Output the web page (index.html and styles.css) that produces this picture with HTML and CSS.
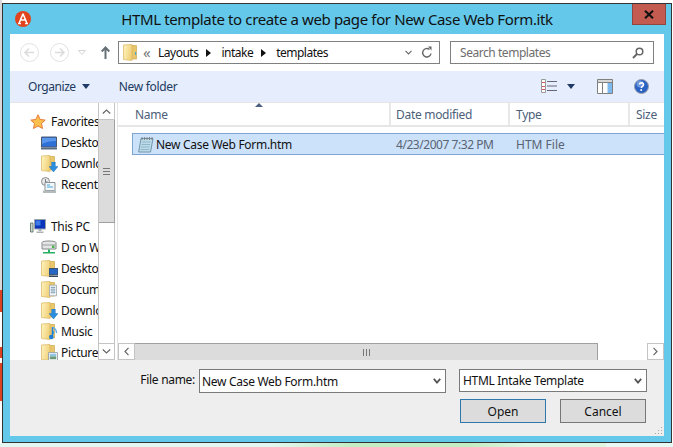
FILE: index.html
```html
<!DOCTYPE html>
<html lang="en">
<head>
<meta charset="utf-8">
<title>HTML template to create a web page</title>
<link rel="stylesheet" href="styles.css">
</head>
<body>
<svg class="defs" width="0" height="0" aria-hidden="true">
  <defs>
    <linearGradient id="fold" x1="0" y1="0" x2="1" y2="0.3">
      <stop offset="0" stop-color="#fff4c0"/>
      <stop offset="1" stop-color="#f0d27c"/>
    </linearGradient>
    <symbol id="folder" viewBox="0 0 14 17">
      <path d="M8 1.500h5.500v13.500H8z" fill="#e8c76c" stroke="#cfa850" stroke-width=".7"/>
      <path d="M.5 1 9 .5v16L.5 15.500z" fill="url(#fold)" stroke="#d8b55e" stroke-width=".7"/>
      <path d="M12 8h1.200v3H12z" fill="#4fa8c8"/>
    </symbol>
  </defs>
</svg>
<div class="desk">
  <div class="bg-red bg-red-a"></div>
  <div class="bg-red bg-red-b"></div>
  <div class="bg-red bg-red-c"></div>
  <div class="bg-gray"></div>
  <div class="bg-green"></div>
  <div class="win">
    <div class="titlebar">
      <svg class="app-logo" width="16" height="16" viewBox="0 0 16 16"><circle cx="8" cy="8" r="8" fill="#e2431c"/><path d="M8 2.800 4 12.500M8 2.800 12 12.500M4.800 9h6.400" fill="none" stroke="#fff" stroke-width="1.600"/><path d="M3 12.600h3M10 12.600h3" stroke="#fff" stroke-width="1.100"/></svg>
      <div class="title">HTML template to create a web page for New Case Web Form.itk</div>
      <div class="close"><svg width="12" height="9" viewBox="0 0 12 9"><path d="M2 .8 10 8.200M10 .8 2 8.200" stroke="#111" stroke-width="2.100"/></svg></div>
    </div>
    <div class="client">
      <div class="navbar">
        <svg class="nav-round" width="19" height="19" viewBox="0 0 19 19"><circle cx="9.500" cy="9.500" r="9" fill="#fff" stroke="#e2e2e2"/><path d="M14 9.500H5.500M9 5.500l-4 4 4 4" fill="none" stroke="#dcdcdc" stroke-width="1.600"/></svg>
        <svg class="nav-round nav-fwd" width="19" height="19" viewBox="0 0 19 19"><circle cx="9.500" cy="9.500" r="9" fill="#fff" stroke="#e2e2e2"/><path d="M5 9.500h8.500M10 5.500l4 4-4 4" fill="none" stroke="#dcdcdc" stroke-width="1.600"/></svg>
        <svg class="nav-drop" width="8" height="5" viewBox="0 0 8 5"><path d="M.5.500h7L4 4.500z" fill="#fff" stroke="#d5d5d5"/></svg>
        <svg class="nav-up" width="9" height="13" viewBox="0 0 9 13"><path d="M4.500 13V1.500M.7 5.500l3.800-4 3.800 4" fill="none" stroke="#667076" stroke-width="2"/></svg>
        <div class="addr">
          <svg class="addr-folder" width="14" height="17"><use href="#folder"/></svg>
          <span class="chev">«</span>
          <span class="crumb">Layouts</span>
          <svg class="crumb-sep" width="5" height="8" viewBox="0 0 5 8"><path d="M0 0l5 4-5 4z" fill="#111"/></svg>
          <span class="crumb">intake</span>
          <svg class="crumb-sep" width="5" height="8" viewBox="0 0 5 8"><path d="M0 0l5 4-5 4z" fill="#111"/></svg>
          <span class="crumb">templates</span>
          <span class="addr-fill"></span>
          <svg class="addr-down" width="7" height="5" viewBox="0 0 7 5"><path d="M.5.800 3.500 4 6.500.8" fill="none" stroke="#666" stroke-width="1.100"/></svg>
          <svg class="addr-refresh" width="12" height="13" viewBox="0 0 12 13"><path d="M10 7.500a4.200 4.200 0 1 1-1.500-4" fill="none" stroke="#666" stroke-width="1.400"/><path d="M7 .5h3.500v4z" fill="#666"/></svg>
        </div>
        <div class="search">
          <span class="search-text">Search templates</span>
          <svg width="12" height="12" viewBox="0 0 12 12"><circle cx="7.500" cy="4.500" r="3.300" fill="none" stroke="#666" stroke-width="1.500"/><path d="M5 7 1 11" stroke="#666" stroke-width="2"/></svg>
        </div>
      </div>
      <div class="cmdbar">
        <span class="cmd cmd-org">Organize</span>
        <svg class="caret" width="8" height="5" viewBox="0 0 8 5"><path d="M0 0h8L4 5z" fill="#1f3a66"/></svg>
        <span class="cmd cmd-new">New folder</span>
        <span class="cmd-fill"></span>
        <svg class="view-icon" width="16" height="14" viewBox="0 0 16 14"><path d="M.5.500h4v13h-4z" fill="#fff" stroke="#999"/><path d="M1 3.500h3M1 7.500h3M1 10.500h3" stroke="#c33" stroke-width=".8"/><path d="M6 2.500h10M6 7h10M6 11.500h10" stroke="#667" stroke-width="1.200"/></svg>
        <svg class="caret caret-view" width="8" height="5" viewBox="0 0 8 5"><path d="M0 0h8L4 5z" fill="#1f3a66"/></svg>
        <svg class="pane-icon" width="16" height="15" viewBox="0 0 16 15"><path d="M.5 1.500h15v13H.5z" fill="#fff" stroke="#7f7f7f"/><path d="M.5.500h15v3H.5z" fill="#d8d8d8" stroke="#7f7f7f"/><path d="M5.500 3.500v11" stroke="#7f7f7f"/><path d="M10.500 4h4.500v10h-4.500z" fill="#7db9ef"/></svg>
        <svg class="help-icon" width="15" height="15" viewBox="0 0 15 15"><circle cx="7.500" cy="7.500" r="7" fill="#2a62c4" stroke="#9a9fa8" stroke-width="1"/><circle cx="6" cy="5" r="3.500" fill="#6d97dd"/><path d="M5.500 5.500C5.500 3.200 9.800 3.300 9.500 5.800 9.300 7.300 7.500 7.300 7.300 9" fill="none" stroke="#fff" stroke-width="1.600"/><circle cx="7.200" cy="11" r="1" fill="#fff"/></svg>
      </div>
      <div class="main">
        <div class="nav-wrap">
          <div class="tree">
            <div class="tree-row top">
              <svg class="ticon" width="16" height="16" viewBox="0 0 16 16"><path d="M8 .8l2.200 4.700 5 .6-3.700 3.400 1 5L8 12l-4.500 2.500 1-5L.8 6.100l5-.6z" fill="#fbc04c" stroke="#e8793a" stroke-width="1"/></svg>
              <span>Favorites</span>
            </div>
            <div class="tree-row">
              <svg class="ticon" width="16" height="14" viewBox="0 0 16 14"><path d="M.500 1h15v10H.500z" fill="#2f6fd8" stroke="#4b5a70"/><path d="M1 2h14v3C9 5 5 6 1 8z" fill="#5a96ea"/><path d="M0 11.500h16v2H0z" fill="#5a6a80"/></svg>
              <span>Desktop</span>
            </div>
            <div class="tree-row">
              <span class="badge-wrap">
                <svg class="ticon" width="14" height="17"><use href="#folder"/></svg>
                <svg class="badge" width="9" height="10" viewBox="0 0 10 11"><path d="M3 0h4v5h3l-5 6-5-6h3z" fill="#2b8ee0" stroke="#1a6db5" stroke-width=".5"/></svg>
              </span>
              <span>Downloads</span>
            </div>
            <div class="tree-row">
              <svg class="ticon" width="16" height="16" viewBox="0 0 16 16"><circle cx="4.500" cy="4.500" r="4" fill="#e8e8e8" stroke="#8a8a8a"/><path d="M4.500 2v3h2" fill="none" stroke="#666" stroke-width=".8"/><path d="M4 5.500h10v8H4z" fill="#f2f6f8" stroke="#8a9298"/><path d="M6 8h3M6 10h6" stroke="#4aa8d8"/><path d="M2 13.500h13V16H2z" fill="#b5babd"/></svg>
              <span>Recent places</span>
            </div>
            <div class="tree-row top pc">
              <svg class="ticon" width="16" height="15" viewBox="0 0 16 15"><path d="M.500 4h2.500v9H.500z" fill="#cfd4d4" stroke="#6a8070"/><path d="M4.500.500h11v9.500h-11z" fill="#0a35b8" stroke="#9aa3ad"/><path d="M5.500 1.500h5v5h-5z" fill="#3c7ae8"/><path d="M8.500 10h3v2h-3zM6.500 12.500h7v1.500h-7z" fill="#aab0b5"/></svg>
              <span>This PC</span>
            </div>
            <div class="tree-row">
              <svg class="ticon" width="16" height="15" viewBox="0 0 16 15"><path d="M1 2.500C1 .5 15 .5 15 2.500v6.500H1z" fill="#e4e6e6" stroke="#858a8a"/><path d="M1.500 5h13" stroke="#9a9f9f"/><path d="M11 5.500h2.500V8H11z" fill="#4cb34c"/><path d="M7 9.500h2V12h5v1.500H2V12h5z" fill="#26b060"/></svg>
              <span>D on WIN</span>
            </div>
            <div class="tree-row">
              <span class="badge-wrap">
                <svg class="ticon" width="14" height="17"><use href="#folder"/></svg>
                <svg class="badge" width="9" height="9" viewBox="0 0 10 10"><path d="M0 .5h10v7H0z" fill="#2566c4" stroke="#33465e"/><path d="M0 8.500h10V10H0z" fill="#33465e"/></svg>
              </span>
              <span>Desktop</span>
            </div>
            <div class="tree-row">
              <span class="badge-wrap">
                <svg class="ticon" width="14" height="17"><use href="#folder"/></svg>
                <svg class="badge badge-doc" width="8" height="13" viewBox="0 0 9 13"><path d="M.5.500h8v12h-8z" fill="#f3f6f8" stroke="#a0a8ae"/><path d="M2 3h5M2 5h5M2 7h5M2 9h5" stroke="#6a8ea8"/></svg>
              </span>
              <span>Documents</span>
            </div>
            <div class="tree-row">
              <span class="badge-wrap">
                <svg class="ticon" width="14" height="17"><use href="#folder"/></svg>
                <svg class="badge" width="9" height="10" viewBox="0 0 10 11"><path d="M3 0h4v5h3l-5 6-5-6h3z" fill="#2b8ee0" stroke="#1a6db5" stroke-width=".5"/></svg>
              </span>
              <span>Downloads</span>
            </div>
            <div class="tree-row">
              <span class="badge-wrap">
                <svg class="ticon" width="14" height="17"><use href="#folder"/></svg>
                <svg class="badge" width="9" height="13" viewBox="0 0 9 13"><path d="M3.500 0v9" stroke="#1f7fd8" stroke-width="1.500"/><path d="M3.500 0c2 1 4 3 4 6" fill="none" stroke="#5aa8e8" stroke-width="1.300"/><ellipse cx="2.300" cy="10" rx="2.300" ry="2.300" fill="#1f7fd8"/></svg>
              </span>
              <span>Music</span>
            </div>
            <div class="tree-row">
              <span class="badge-wrap">
                <svg class="ticon" width="14" height="17"><use href="#folder"/></svg>
                <svg class="badge" width="10" height="9" viewBox="0 0 11 10"><path d="M.5.500h10v9H.5z" fill="#eef3f5" stroke="#98a2a8"/><path d="M2 2h7v3H2z" fill="#8fc4e4"/><path d="M2 5h7v3H2z" fill="#6f9a7a"/></svg>
              </span>
              <span>Pictures</span>
            </div>
          </div>
          <div class="vscroll">
            <div class="sb-btn"><svg width="9" height="5" viewBox="0 0 9 5"><path d="M.8 4.500 4.500 1l3.700 3.500" fill="none" stroke="#666" stroke-width="1.200"/></svg></div>
            <div class="v-thumb"><span class="grip-v"></span></div>
            <div class="sb-fill"></div>
            <div class="sb-btn sb-btn-down"><svg width="9" height="5" viewBox="0 0 9 5"><path d="M.8.500 4.500 4l3.700-3.500" fill="none" stroke="#666" stroke-width="1.200"/></svg></div>
          </div>
        </div>
        <div class="files">
          <div class="head">
            <svg class="sort" width="8" height="4" viewBox="0 0 8 4"><path d="M4 0l4 4H0z" fill="#4c5f80"/></svg>
            <div class="col col-name">Name</div>
            <div class="col col-date">Date modified</div>
            <div class="col col-type">Type</div>
            <div class="col col-size">Size</div>
          </div>
          <div class="list">
            <div class="file">
              <div class="cell cell-name">
                <svg class="file-icon" width="16" height="17" viewBox="0 0 16 17"><path d="M3 2.500h12L12.500 16H.7z" fill="#bddbe8" stroke="#6f95a8"/><path d="M4 6h8.500M3.500 8.500H12M3 11h8.500M2.500 13.500h8.500" stroke="#83acc0" stroke-width=".8"/><path d="M4 1v3M6.500 1v3M9 1v3M11.500 1v3M14 1v3" stroke="#7a7a7a" stroke-width=".9"/></svg>
                <span>New Case Web Form.htm</span>
              </div>
              <div class="cell cell-date">4/23/2007 7:32 PM</div>
              <div class="cell cell-type">HTM File</div>
            </div>
          </div>
          <div class="hscroll">
            <div class="sb-btn-h"><svg width="5" height="9" viewBox="0 0 5 9"><path d="M4.500.8 1 4.500l3.500 3.700" fill="none" stroke="#666" stroke-width="1.200"/></svg></div>
            <div class="h-thumb"><span class="grip-h"></span></div>
            <div class="sb-fill"></div>
            <div class="sb-btn-h sb-btn-right"><svg width="5" height="9" viewBox="0 0 5 9"><path d="M.5.8 4 4.500.5 8.200" fill="none" stroke="#666" stroke-width="1.200"/></svg></div>
          </div>
        </div>
      </div>
      <div class="footer">
        <div class="fields">
          <label class="fname-label">File name:</label>
          <div class="combo combo-name"><span>New Case Web Form.htm</span><svg width="8" height="6" viewBox="0 0 8 6"><path d="M.8.800 4 4.500 7.200.8" fill="none" stroke="#555" stroke-width="1.800"/></svg></div>
          <div class="combo combo-type"><span>HTML Intake Template</span><svg width="8" height="6" viewBox="0 0 8 6"><path d="M.8.800 4 4.500 7.200.8" fill="none" stroke="#555" stroke-width="1.800"/></svg></div>
        </div>
        <div class="actions">
          <div class="btn btn-primary">Open</div>
          <div class="btn">Cancel</div>
        </div>
        <svg class="sizer" width="9" height="9" viewBox="0 0 9 9"><path d="M7 1h1v1H7zM4 4h1v1H4zM7 4h1v1H7zM1 7h1v1H1zM4 7h1v1H4zM7 7h1v1H7z" fill="#a8a8a8"/></svg>
      </div>
    </div>
  </div>
</div>
</body>
</html>
```
FILE: styles.css
```css
* { box-sizing: border-box; }
html, body { margin: 0; padding: 0; }
body { font-family: "Noto Sans", "Open Sans", sans-serif; font-size: 12px; letter-spacing: -0.3px; color: #111; background: #fff; }
svg { display: block; flex: none; }
.defs { position: absolute; }

.desk { position: relative; width: 673px; height: 447px; overflow: hidden; background: #fff; }
.bg-gray { position: absolute; left: 0; top: 0; width: 2px; height: 290px; background: #d8d8d8; }
.bg-red { position: absolute; left: 0; width: 2px; background: #dd4320; }
.bg-red-a { top: 290px; height: 22px; }
.bg-red-b { top: 347px; height: 11px; }
.bg-red-c { top: 363px; height: 38px; }
.bg-green { position: absolute; left: 0; right: 0; top: 443px; height: 4px; background: linear-gradient(90deg, #e4f8f1 0 40%, #c4edc4 52% 70%, #dff6e2 78% 90%, #e8f8f2 90%); }

.win { position: absolute; left: 2px; top: 3px; width: 670px; height: 440px; border: 1px solid #333; background: #63c8ea; padding: 0 7px 6px; display: flex; flex-direction: column; }

.titlebar { height: 30px; position: relative; display: flex; align-items: center; justify-content: center; flex: none; }
.app-logo { position: absolute; left: 5px; top: 7px; }
.title { font-size: 15px; letter-spacing: -0.37px; color: #111; white-space: nowrap; }
.close { position: absolute; right: -2px; top: 0; width: 34px; height: 21px; background: #c35b51; border: 1px solid #8f4740; border-top: 0; display: flex; align-items: center; justify-content: center; }

.client { flex: 1; background: #fff; display: flex; flex-direction: column; min-height: 0; }

.navbar { height: 37px; flex: none; display: flex; align-items: center; padding-left: 10px; }
.nav-fwd { margin-left: 11px; }
.nav-drop { margin-left: 9px; }
.nav-up { margin-left: 15px; }
.addr { width: 322px; height: 23px; margin-left: 8px; border: 1px solid #808080; display: flex; align-items: center; padding: 0 5px 0 4px; white-space: nowrap; }
.chev { margin-left: 6px; color: #777; font-size: 15px; line-height: 1; width: 9px; }
.crumb { letter-spacing: -0.5px; }
.chev + .crumb { margin-left: 6px; }
.crumb-sep { margin: 0 10px 0 8px; }
.addr-fill { flex: 1; }
.addr-down { margin-right: 9px; }
.addr-refresh { margin-right: 1px; }
.search { width: 204px; height: 23px; margin-left: 10px; border: 1px solid #808080; display: flex; align-items: center; justify-content: space-between; padding: 0 9px 0 9px; }
.search-text { color: #6d6d6d; letter-spacing: -0.45px; }

.cmdbar { height: 31px; flex: none; background: #e6eefd; display: flex; align-items: center; padding-left: 18px; padding-bottom: 1px; }
.cmd { color: #233a5e; }
.cmd-org { letter-spacing: -0.45px; }
.caret { margin-left: 6px; }
.cmd-new { margin-left: 29px; }
.cmd-fill { flex: 1; }
.caret-view { margin-left: 10px; }
.pane-icon { margin-left: 22px; }
.help-icon { margin-left: 21px; margin-right: 15px; }

.main { flex: 1; min-height: 0; display: flex; border-top: 1px solid #e4e4e4; }
.nav-wrap { width: 105px; flex: none; display: flex; }
.tree { width: 88px; flex: none; overflow: hidden; padding-top: 8px; }
.tree-row { height: 21px; display: flex; align-items: center; gap: 4px; padding-left: 31px; white-space: nowrap; color: #111; }
.tree-row.top { padding-left: 20px; gap: 5px; }
.tree-row.pc { margin-top: 21px; }
.badge-wrap { position: relative; display: block; width: 16px; height: 17px; flex: none; }
.badge { position: absolute; right: -1px; bottom: 0; }
.badge-doc { right: 0; bottom: 1px; }

.vscroll { width: 17px; flex: none; display: flex; flex-direction: column; border-left: 1px solid #c4c4c4; border-right: 1px solid #c4c4c4; }
.sb-btn { height: 17px; flex: none; display: flex; align-items: center; justify-content: center; border-bottom: 1px solid #c4c4c4; }
.sb-btn-down { border-top: 1px solid #c4c4c4; }
.v-thumb { height: 103px; flex: none; background: #dcdcdc; border-bottom: 1px solid #a0a0a0; border-right: 1px solid #a0a0a0; margin-right: -1px; display: flex; align-items: center; justify-content: center; }
.grip-v { width: 7px; height: 7px; border-top: 1px solid #777; border-bottom: 1px solid #777; background: linear-gradient(#dcdcdc 0 2px, #777 2px 3px, #dcdcdc 3px); }
.sb-fill { flex: 1; }

.files { flex: 1; min-width: 0; margin-left: 2px; border-left: 1px solid #e4e4e4; display: flex; flex-direction: column; }
.head { height: 24px; flex: none; display: flex; align-items: center; border-bottom: 2px solid #e6e6e6; position: relative; color: #4c607a; }
.sort { position: absolute; left: 137px; top: 0; }
.col { height: 100%; display: flex; align-items: center; padding-left: 6px; border-right: 2px solid #e8e8e8; }
.col-name { width: 273px; padding-left: 17px; }
.col-date { width: 119px; padding-left: 5px; }
.col-type { width: 120px; }
.col-size { flex: 1; border-right: 0; }
.list { flex: 1; padding: 6px 0 0 14px; min-height: 0; }
.file { height: 22px; display: flex; align-items: center; background: #cce2fb; border: 1px solid #7fa6d2; border-right: 0; }
.cell-name { width: 263px; display: flex; align-items: center; gap: 2px; padding-left: 5px; color: #111; }
.cell-date { width: 120px; color: #5a6472; letter-spacing: -0.45px; }
.cell-type { color: #5a6472; letter-spacing: 0; }

.hscroll { height: 17px; flex: none; display: flex; }
.sb-btn-h { width: 17px; flex: none; display: flex; align-items: center; justify-content: center; border: 1px solid #c4c4c4; }
.sb-btn-right { margin-left: auto; }
.h-thumb { width: 463px; flex: none; background: #dcdcdc; border-top: 1px solid #a0a0a0; border-right: 1px solid #a0a0a0; display: flex; align-items: center; justify-content: center; }
.grip-h { width: 7px; height: 7px; border-left: 1px solid #777; border-right: 1px solid #777; background: linear-gradient(90deg, #dcdcdc 0 2px, #777 2px 3px, #dcdcdc 3px); }

.footer { height: 76px; flex: none; background: #eeeeee; position: relative; padding-top: 9px; }
.fields { display: flex; align-items: flex-start; height: 24px; }
.fname-label { width: 185px; text-align: right; line-height: 22px; }
.combo { background: #fff; border: 1px solid #7a7a7a; display: flex; align-items: center; justify-content: space-between; padding: 0 4px 0 3px; color: #111; }
.combo-name { width: 247px; height: 24px; margin-left: 4px; padding-left: 2px; }
.combo-type { width: 188px; height: 23px; margin-left: 13px; }
.actions { display: flex; gap: 14px; margin: 6px 0 0 450px; }
.btn { width: 86px; height: 24px; background: #dcdcdc; border: 1px solid #777; display: flex; align-items: center; justify-content: center; color: #111; letter-spacing: 0; }
.btn-primary { border-color: #2e78ab; }
.sizer { position: absolute; right: 1px; bottom: 1px; }
```
